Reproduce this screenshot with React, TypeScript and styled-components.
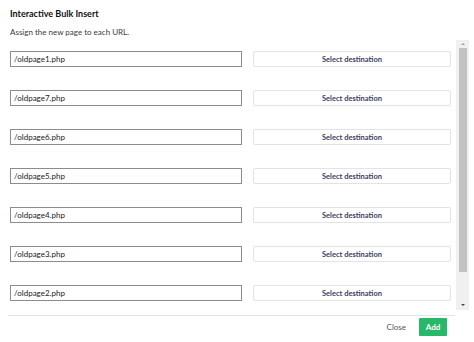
import React from 'react';
import styled, { createGlobalStyle } from 'styled-components';

const GlobalStyle = createGlobalStyle`
  html, body {
    margin: 0;
    padding: 0;
    background: #ffffff;
  }
  body {
    font-family: Lato, "Liberation Sans", Arial, sans-serif;
    color: #222222;
  }
`;

const Dialog = styled.div`
  width: 474px;
  height: 342px;
  box-sizing: border-box;
  padding: 8px 4px 0 8px;
  display: flex;
  flex-direction: column;
  background: #ffffff;
`;

const Title = styled.h3`
  margin: 0;
  padding-left: 2px;
  font-size: 9px;
  line-height: 12px;
  font-weight: 700;
  color: #111111;
`;

const Subtitle = styled.p`
  margin: 6px 0 2px;
  padding-left: 2px;
  font-size: 8px;
  line-height: 12px;
  color: #3a3a3a;
`;

const ScrollArea = styled.div`
  display: flex;
  height: 276px;
`;

const Viewport = styled.div`
  flex: 1;
  overflow: hidden;
  border-bottom: 1px solid #e4e4e4;
`;

const Scrollbar = styled.div`
  width: 13px;
  margin: 0 1px 6px 1px;
  display: flex;
  flex-direction: column;
  align-items: center;
  background: #f0f0f0;
`;

const Arrow = styled.div<{ $down?: boolean }>`
  width: 0;
  height: 0;
  margin: ${(p) => (p.$down ? 'auto 0 4px' : '3px 0 3px')};
  border-left: 2.5px solid transparent;
  border-right: 2.5px solid transparent;
  ${(p) =>
    p.$down
      ? 'border-top: 2.5px solid #4a4a4a;'
      : 'border-bottom: 2.5px solid #a0a0a0;'}
`;

const Thumb = styled.div`
  width: 8px;
  height: 224px;
  background: #c2c2c2;
`;

const RowList = styled.div`
  display: flex;
  flex-direction: column;
  gap: 23px;
  padding: 11px 4px 0 2px;
`;

const Row = styled.div`
  display: grid;
  grid-template-columns: 232px 198px;
  column-gap: 11px;
  align-items: start;
`;

const UrlInput = styled.input`
  box-sizing: border-box;
  width: 100%;
  height: 16px;
  margin: 0;
  padding: 0 3px;
  border: 1px solid #8c8c8c;
  border-radius: 0;
  outline: none;
  font-family: Lato, "Liberation Sans", Arial, sans-serif;
  font-size: 8px;
  color: #222222;
  background: #ffffff;
`;

const DestinationButton = styled.button`
  box-sizing: border-box;
  width: 100%;
  height: 16px;
  margin: 0;
  padding: 0;
  border: 1px solid #e2e3e8;
  border-radius: 2px;
  background: #ffffff;
  font-family: Lato, "Liberation Sans", Arial, sans-serif;
  font-size: 7.5px;
  font-weight: 700;
  color: #3b4060;
  cursor: pointer;
`;

const Footer = styled.div`
  flex: 1;
  display: flex;
  justify-content: flex-end;
  align-items: flex-start;
  gap: 7px;
  padding: 2px 23px 0 0;
`;

const CloseButton = styled.button`
  height: 18px;
  padding: 0 6px;
  border: none;
  background: transparent;
  font-family: Lato, "Liberation Sans", Arial, sans-serif;
  font-size: 8px;
  color: #555555;
  cursor: pointer;
`;

const AddButton = styled.button`
  height: 18px;
  width: 28px;
  padding: 0;
  border: none;
  border-radius: 1px;
  background: #27b86a;
  font-family: Lato, "Liberation Sans", Arial, sans-serif;
  font-size: 8px;
  font-weight: 700;
  color: #ffffff;
  cursor: pointer;
`;

const urls = [
  '/oldpage1.php',
  '/oldpage7.php',
  '/oldpage6.php',
  '/oldpage5.php',
  '/oldpage4.php',
  '/oldpage3.php',
  '/oldpage2.php',
];

const App: React.FC = () => {
  return (
    <>
      <GlobalStyle />
      <Dialog>
        <Title>Interactive Bulk Insert</Title>
        <Subtitle>Assign the new page to each URL.</Subtitle>

        <ScrollArea>
          <Viewport>
            <RowList>
              {urls.map((url) => (
                <Row key={url}>
                  <UrlInput defaultValue={url} />
                  <DestinationButton>Select destination</DestinationButton>
                </Row>
              ))}
            </RowList>
          </Viewport>
          <Scrollbar>
            <Arrow />
            <Thumb />
            <Arrow $down />
          </Scrollbar>
        </ScrollArea>

        <Footer>
          <CloseButton>Close</CloseButton>
          <AddButton>Add</AddButton>
        </Footer>
      </Dialog>
    </>
  );
};

export default App;
